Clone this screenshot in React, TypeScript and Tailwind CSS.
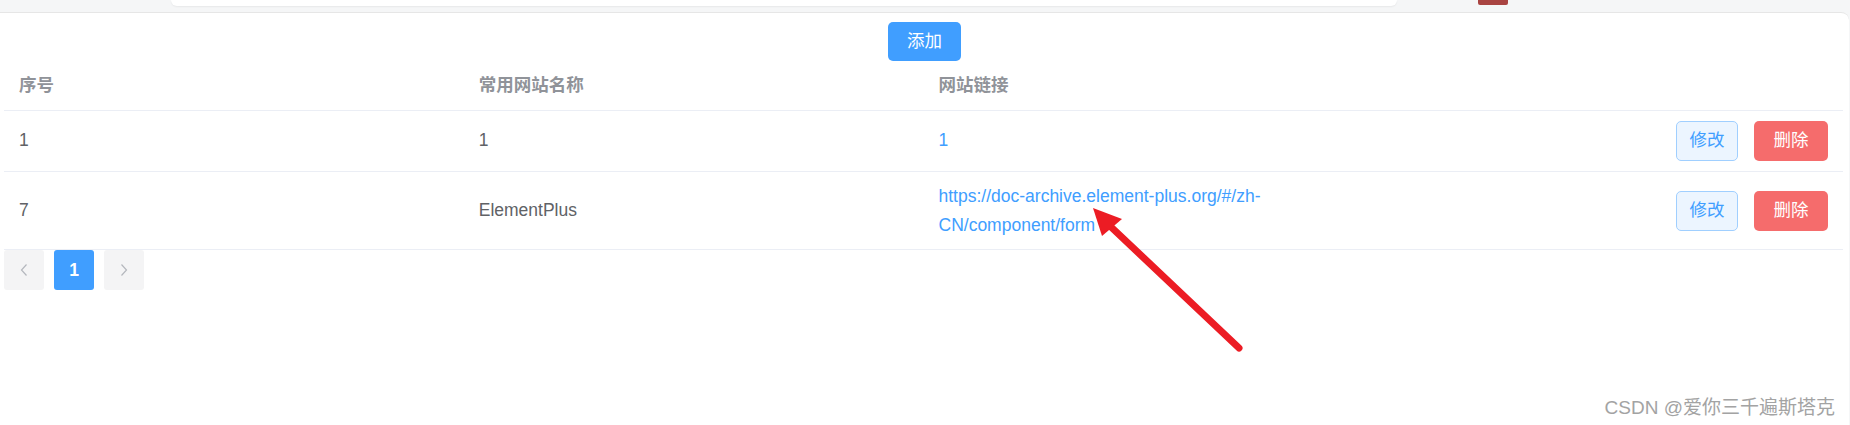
import React from "react";

interface SiteRow {
  id: number;
  name: string;
  url: string;
}

const rows: SiteRow[] = [
  { id: 1, name: "1", url: "1" },
  { id: 7, name: "ElementPlus", url: "https://doc-archive.element-plus.org/#/zh-CN/component/form" },
];

function Chevron({ dir }: { dir: "left" | "right" }) {
  return (
    <svg width="10" height="14" viewBox="0 0 10 14" fill="none">
      <path
        d={dir === "left" ? "M7.5 1.5 L2.5 7 L7.5 12.5" : "M2.5 1.5 L7.5 7 L2.5 12.5"}
        stroke="#b4b7bd"
        strokeWidth="1.2"
      />
    </svg>
  );
}

export default function App() {
  return (
    <div className="relative h-[425px] w-[1850px] overflow-hidden bg-[#f5f6f7] font-['Liberation_Sans','Noto_Sans_CJK_SC',sans-serif]">
      {/* top strip: search box edge + badge */}
      <div className="flex h-[12px] items-start">
        <div className="ml-[171px] h-[6px] w-[1226px] rounded-b-[14px] bg-white shadow-[0_1px_2px_rgba(0,0,0,0.06)]" />
        <div className="ml-[81px] h-[5px] w-[30px] rounded-b-[2px] bg-[#a94442]" />
      </div>

      {/* panel */}
      <div className="h-[413px] mr-[1px] rounded-tr-[8px] border-t border-[#e6e6e6] bg-white">
        <div className="flex justify-center pt-[9px]">
          <button className="h-[39px] rounded-[5px] bg-[#409eff] px-[19px] text-[17.5px] text-white">
            添加
          </button>
        </div>

        <div className="pl-[4px] pr-[6px]">
          <table className="w-full table-fixed border-collapse text-[17.5px] leading-[28.75px]">
            <thead>
              <tr className="border-b border-[#ebeef5]">
                <th className="px-[15px] py-[10px] text-left font-bold text-[#909399]">序号</th>
                <th className="px-[15px] py-[10px] text-left font-bold text-[#909399]">常用网站名称</th>
                <th className="px-[15px] py-[10px] text-left font-bold text-[#909399]">网站链接</th>
                <th className="px-[15px] py-[10px]" />
              </tr>
            </thead>
            <tbody>
              {rows.map((r) => (
                <tr key={r.id} className="border-b border-[#ebeef5]">
                  <td className="px-[15px] py-[10px] align-middle text-[#606266]">{r.id}</td>
                  <td className="px-[15px] py-[10px] align-middle text-[#606266]">{r.name}</td>
                  <td className="px-[15px] py-[10px] align-middle text-[#409eff]">{r.url}</td>
                  <td className="px-[15px] py-[10px] align-middle">
                    <div className="flex justify-end gap-[16px]">
                      <button className="h-[40px] w-[62px] rounded-[5px] border border-[#a0cfff] bg-[#ecf5ff] text-[17.5px] text-[#409eff]">
                        修改
                      </button>
                      <button className="h-[40px] w-[74px] rounded-[5px] bg-[#f56c6c] text-[17.5px] text-white">
                        删除
                      </button>
                    </div>
                  </td>
                </tr>
              ))}
            </tbody>
          </table>

          {/* pagination */}
          <div className="flex gap-[10px]">
            <button className="flex h-[40px] w-[40px] items-center justify-center rounded-[3px] bg-[#f4f4f5]">
              <Chevron dir="left" />
            </button>
            <button className="h-[40px] w-[40px] rounded-[3px] bg-[#409eff] text-[17.5px] font-bold text-white">
              1
            </button>
            <button className="flex h-[40px] w-[40px] items-center justify-center rounded-[3px] bg-[#f4f4f5]">
              <Chevron dir="right" />
            </button>
          </div>
        </div>
      </div>

      {/* annotation arrow */}
      <svg className="absolute left-[1080px] top-[195px]" width="175" height="165" viewBox="1080 195 175 165">
        <line x1="1239" y1="348" x2="1110" y2="226" stroke="#ec1c24" strokeWidth="7" strokeLinecap="round" />
        <polygon points="1093,208 1122,219 1102,236" fill="#ec1c24" />
      </svg>

      {/* watermark */}
      <div className="absolute right-[15px] top-[396px] text-[19px] leading-[24px] text-[#a3a3a3]">
        CSDN @爱你三千遍斯塔克
      </div>
    </div>
  );
}
